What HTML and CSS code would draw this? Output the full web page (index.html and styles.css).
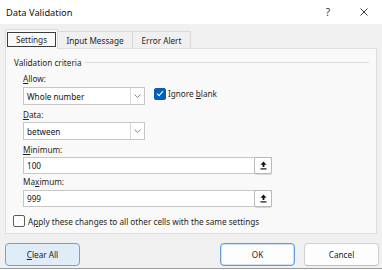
FILE: index.html
```html
<!DOCTYPE html>
<html>
<head>
<meta charset="utf-8">
<link rel="stylesheet" href="styles.css">
</head>
<body>
<div class="window">
  <div class="titlebar">
    <span class="title">Data Validation</span>
    <span class="tb-btn">?</span>
    <span class="tb-btn"><svg width="8" height="8" viewBox="0 0 8 8"><path d="M0.5 0.5 L7.5 7.5 M7.5 0.5 L0.5 7.5" stroke="#222" stroke-width="0.9" fill="none"/></svg></span>
  </div>
  <div class="body">
    <div class="tabs">
      <div class="tab active"><span class="focus">Settings</span></div>
      <div class="tab">Input Message</div>
      <div class="tab">Error Alert</div>
    </div>
    <div class="panel">
      <div class="legend"><span>Validation criteria</span><span class="rule"></span></div>
      <div class="group">
        <div class="label lbl-allow"><u>A</u>llow:</div>
        <div class="row">
          <div class="select"><span class="val">Whole number</span><span class="chev"><svg width="7" height="4" viewBox="0 0 7 4"><path d="M0.5 0.5 L3.5 3.5 L6.5 0.5" stroke="#6a6a6a" stroke-width="0.8" fill="none"/></svg></span></div>
          <div class="check"><span class="box checked"><svg width="8" height="7" viewBox="0 0 8 7"><path d="M1 3.6 L3 5.6 L7 1.2" stroke="#fff" stroke-width="1.1" fill="none"/></svg></span><span>Ignore <u>b</u>lank</span></div>
        </div>
        <div class="label lbl-data"><u>D</u>ata:</div>
        <div class="row row-data">
          <div class="select"><span class="val">between</span><span class="chev"><svg width="7" height="4" viewBox="0 0 7 4"><path d="M0.5 0.5 L3.5 3.5 L6.5 0.5" stroke="#6a6a6a" stroke-width="0.8" fill="none"/></svg></span></div>
        </div>
        <div class="label lbl-min"><u>M</u>inimum:</div>
        <div class="input in-min"><span class="val">100</span><span class="ref"><svg width="7" height="9" viewBox="0 0 7 9"><path d="M3.5 0.5 L6.5 3.8 L4.4 3.8 L4.4 6 L2.6 6 L2.6 3.8 L0.5 3.8 Z" fill="#111"/><rect x="0.5" y="7.3" width="6" height="1.2" fill="#111"/></svg></span></div>
        <div class="label lbl-max">Ma<u>x</u>imum:</div>
        <div class="input in-max"><span class="val">999</span><span class="ref"><svg width="7" height="9" viewBox="0 0 7 9"><path d="M3.5 0.5 L6.5 3.8 L4.4 3.8 L4.4 6 L2.6 6 L2.6 3.8 L0.5 3.8 Z" fill="#111"/><rect x="0.5" y="7.3" width="6" height="1.2" fill="#111"/></svg></span></div>
      </div>
      <div class="apply"><span class="box"></span><span>A<u>p</u>ply these changes to all other cells with the same settings</span></div>
    </div>
    <div class="buttons">
      <button class="btn btn-clear"><u>C</u>lear All</button>
      <div class="btn-group">
        <button class="btn btn-ok">OK</button>
        <button class="btn btn-cancel">Cancel</button>
      </div>
    </div>
  </div>
</div>
</body>
</html>
```
FILE: styles.css
```css
* { box-sizing: border-box; }
html, body { margin: 0; padding: 0; background: #fff; }
body { font-family: "Noto Sans", "Open Sans", sans-serif; font-size: 8.2px; color: #1f1f1f; }
u { text-decoration: underline; text-underline-offset: 1px; }

.window {
  width: 382px;
  height: 269px;
  background: #f0f0f0;
  border-bottom: 1px solid #9c9c9c;
  display: flex;
  flex-direction: column;
}

.titlebar {
  height: 24px;
  background: #fff;
  display: flex;
  align-items: center;
  padding-left: 6px;
  font-size: 9.3px;
  color: #111;
}
.title { flex: 1; }
.tb-btn {
  width: 36px;
  display: flex;
  justify-content: center;
  align-items: center;
  font-size: 10px;
  color: #333;
}

.body {
  flex: 1;
  padding: 5px 5px 0 5px;
  display: flex;
  flex-direction: column;
}

.tabs {
  height: 19px;
  display: flex;
  align-items: flex-end;
  position: relative;
  z-index: 1;
}
.tab {
  height: 17px;
  border: 1px solid #dadada;
  border-bottom: none;
  background: #f0f0f0;
  display: flex;
  align-items: center;
  justify-content: center;
  margin-left: -1px;
}
.tab:nth-child(2) { width: 76px; }
.tab:nth-child(3) { width: 59px; }
.tab.active {
  width: 53px;
  height: 20px;
  margin-left: 0;
  margin-bottom: -1px;
  background: #f9f9f9;
  align-items: flex-start;
  padding-top: 2px;
}
.focus {
  width: 49px;
  height: 15px;
  border: 1px solid #3c3c3c;
  display: flex;
  align-items: center;
  justify-content: center;
}

.panel {
  height: 186px;
  background: #f9f9f9;
  border: 1px solid #dedede;
  padding: 7px 7px 0 8px;
}
.legend {
  height: 12px;
  display: flex;
  align-items: center;
}
.rule {
  flex: 1;
  height: 1px;
  background: #dcdcdc;
  margin-left: 3px;
}

.group { padding-left: 9px; }
.label {
  height: 12px;
  line-height: 12px;
}
.lbl-allow { margin-top: 5px; }
.lbl-data { margin-top: 4px; }
.lbl-min { margin-top: 4px; }
.lbl-max { margin-top: 2px; }

.row {
  display: flex;
  align-items: center;
  margin-top: 2px;
}
.row-data { margin-top: 1px; }

.select {
  width: 122px;
  height: 18px;
  background: #fff;
  border: 1px solid #c6c6c6;
  display: flex;
  align-items: stretch;
}
.val {
  flex: 1;
  display: flex;
  align-items: center;
  padding-left: 3px;
  color: #111;
}
.chev {
  width: 14px;
  border-left: 1px solid #dadada;
  display: flex;
  align-items: center;
  justify-content: center;
}

.check {
  display: flex;
  align-items: center;
  margin-left: 9px;
  margin-top: -5px;
  gap: 2px;
}
.box {
  width: 12px;
  height: 12px;
  border-radius: 2px;
  border: 1px solid #5c5c5c;
  background: #fdfdfd;
  display: flex;
  align-items: center;
  justify-content: center;
}
.box.checked {
  background: #005fb8;
  border-color: #005fb8;
}

.input {
  width: 249px;
  height: 17px;
  background: #fff;
  border: 1px solid #c6c6c6;
  display: flex;
  align-items: stretch;
}
.in-min { margin-top: 1px; }
.in-max { margin-top: 2px; }
.ref {
  width: 18px;
  margin: -1px -1px -1px 0;
  border: 1px solid #b9b9b9;
  border-radius: 2px;
  background: #fff;
  box-shadow: 0 1px 0 #d8d8d8;
  display: flex;
  align-items: center;
  justify-content: center;
}

.apply {
  margin-top: 8px;
  margin-left: -1px;
  height: 12px;
  display: flex;
  align-items: center;
  gap: 3px;
}

.buttons {
  margin-top: 9px;
  display: flex;
  justify-content: space-between;
  margin-right: -2px;
}
.btn-group { display: flex; gap: 9px; }
.btn {
  width: 75px;
  height: 23px;
  font-family: inherit;
  font-size: 8.2px;
  color: #1b1b1b;
  border-radius: 4px;
  border: 1px solid #d0d0d0;
  border-bottom-color: #bdbdbd;
  background: #fdfdfd;
  padding: 0;
}
.btn-clear {
  background: #e0ecf8;
  border: 1px solid #6aa2dc;
}
.btn-ok {
  border: 1px solid #5f9ee0;
  box-shadow: inset 0 0 0 0.5px #9cc4ee;
}
```
